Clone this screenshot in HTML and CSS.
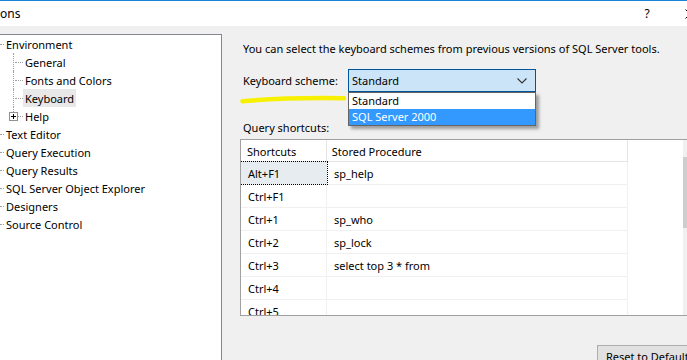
FILE: index.html
```html
<!DOCTYPE html>
<html>
<head>
<meta charset="utf-8">
<title>Options</title>
<link rel="stylesheet" href="styles.css">
</head>
<body>
<div class="window">
  <div class="titlebar">
    <span class="title">ons</span>
    <span class="help">?</span>
    <span class="close"><svg width="10" height="10" viewBox="0 0 10 10"><path d="M0.5 0.5L9.5 9.5M9.5 0.5L0.5 9.5" stroke="#000" stroke-width="1" fill="none"/></svg></span>
  </div>
  <div class="main">
    <div class="tree">
      <div class="node"><span class="conn-top"></span><span class="label">Environment</span></div>
      <div class="node"><span class="conn-child"></span><span class="label">General</span></div>
      <div class="node"><span class="conn-child"></span><span class="label">Fonts and Colors</span></div>
      <div class="node"><span class="conn-child"></span><span class="label selected">Keyboard</span></div>
      <div class="node"><span class="conn-child last"><span class="expander"></span></span><span class="label">Help</span></div>
      <div class="node"><span class="conn-top"></span><span class="label">Text Editor</span></div>
      <div class="node"><span class="conn-top"></span><span class="label">Query Execution</span></div>
      <div class="node"><span class="conn-top"></span><span class="label">Query Results</span></div>
      <div class="node"><span class="conn-top"></span><span class="label">SQL Server Object Explorer</span></div>
      <div class="node"><span class="conn-top"></span><span class="label">Designers</span></div>
      <div class="node"><span class="conn-top"></span><span class="label">Source Control</span></div>
    </div>
    <div class="pane">
      <p class="desc">You can select the keyboard schemes from previous versions of SQL Server tools.</p>
      <div class="scheme-row">
        <span class="scheme-label">Keyboard scheme:</span>
        <div class="combo-wrap">
          <div class="combo">
            <span class="combo-text">Standard</span>
            <svg class="chev" width="10" height="6" viewBox="0 0 10 6"><path d="M0.5 0.5L5 5L9.5 0.5" stroke="#333" stroke-width="1.1" fill="none"/></svg>
          </div>
          <div class="dropdown">
            <div class="opt">Standard</div>
            <div class="opt active">SQL Server 2000</div>
          </div>
        </div>
        <svg class="marker" width="110" height="10" viewBox="0 0 110 10"><path d="M2.5 7.2 C30 4.8, 70 3.6, 104 4.2" stroke="#f7f000" stroke-width="4.5" stroke-linecap="round" fill="none"/></svg>
      </div>
      <p class="qs-label">Query shortcuts:</p>
      <div class="grid">
        <div class="grid-body">
          <div class="row head">
            <div class="c1">Shortcuts</div>
            <div class="c2">Stored Procedure</div>
          </div>
          <div class="row">
            <div class="c1 focus">Alt+F1</div>
            <div class="c2">sp_help</div>
          </div>
          <div class="row">
            <div class="c1">Ctrl+F1</div>
            <div class="c2"></div>
          </div>
          <div class="row">
            <div class="c1">Ctrl+1</div>
            <div class="c2">sp_who</div>
          </div>
          <div class="row">
            <div class="c1">Ctrl+2</div>
            <div class="c2">sp_lock</div>
          </div>
          <div class="row">
            <div class="c1">Ctrl+3</div>
            <div class="c2">select top 3 * from</div>
          </div>
          <div class="row">
            <div class="c1">Ctrl+4</div>
            <div class="c2"></div>
          </div>
          <div class="row">
            <div class="c1">Ctrl+5</div>
            <div class="c2"></div>
          </div>
        </div>
        <div class="scrollbar"><div class="thumb"></div></div>
      </div>
      <div class="footer">
        <button class="btn">Reset to Default</button>
      </div>
    </div>
  </div>
</div>
</body>
</html>
```
FILE: styles.css
```css
* { box-sizing: border-box; }
html, body {
  margin: 0;
  padding: 0;
  width: 687px;
  height: 360px;
  overflow: hidden;
  background: #f0f0f0;
}
body {
  font-family: "Noto Sans", "Open Sans", sans-serif;
  font-size: 11px;
  color: #000;
}
.window {
  width: 687px;
  height: 360px;
  overflow: hidden;
}
.titlebar {
  height: 26px;
  border-top: 1px solid #1883d7;
  background: #fff;
  display: flex;
  align-items: center;
}
.title { line-height: 16px; font-size: 12px; }
.help {
  margin-left: auto;
  width: 40px;
  text-align: center;
  line-height: 16px;
  font-size: 12px;
}
.close {
  width: 46px;
  flex-shrink: 0;
  margin-right: -26px;
  display: flex;
  justify-content: center;
  align-items: center;
}
.close svg { display: block; }

.main {
  display: flex;
  padding-top: 8px;
  height: 334px;
}
.tree {
  width: 222px;
  flex-shrink: 0;
  background: #fff;
  border-top: 1px solid #828790;
  border-right: 1px solid #828790;
  height: 400px;
  display: flex;
  flex-direction: column;
}
.node {
  height: 18px;
  display: flex;
  align-items: center;
}
.label {
  padding: 1px 2px 0;
  height: 18px;
  line-height: 17px;
  white-space: nowrap;
}
.label.selected { background: #e8e8e8; }
.conn-top {
  width: 4px;
  height: 18px;
  position: relative;
}
.conn-top::after {
  content: "";
  position: absolute;
  left: 0;
  top: 9px;
  width: 4px;
  border-top: 1px dotted #a0a0a0;
}
.conn-child {
  margin-left: 13px;
  width: 10px;
  height: 18px;
  position: relative;
}
.conn-child::before {
  content: "";
  position: absolute;
  left: 0;
  top: 0;
  height: 18px;
  border-left: 1px dotted #a0a0a0;
}
.conn-child::after {
  content: "";
  position: absolute;
  left: 2px;
  top: 9px;
  width: 8px;
  border-top: 1px dotted #a0a0a0;
}
.conn-child.last::before { height: 5px; }
.conn-child.last::after { left: 5px; width: 5px; }
.expander {
  position: absolute;
  left: -4px;
  top: 5px;
  width: 9px;
  height: 9px;
  border: 1px solid #919191;
  background: #fff;
}
.expander::before {
  content: "";
  position: absolute;
  left: 1px;
  top: 3px;
  width: 5px;
  height: 1px;
  background: #000;
}
.expander::after {
  content: "";
  position: absolute;
  left: 3px;
  top: 1px;
  width: 1px;
  height: 5px;
  background: #000;
}

.pane {
  margin-left: 18px;
  display: flex;
  flex-direction: column;
  flex: 1;
  min-width: 0;
}
.desc {
  margin: 7px 0 0 3px;
  line-height: 16px;
  white-space: nowrap;
}
.scheme-row {
  margin-top: 12px;
  display: flex;
  align-items: center;
  position: relative;
  height: 23px;
}
.scheme-label {
  margin-left: 3px;
  width: 105px;
  line-height: 16px;
  white-space: nowrap;
}
.combo-wrap {
  position: relative;
  width: 188px;
  height: 23px;
}
.combo {
  height: 23px;
  border: 1px solid #005499;
  background: #cce4f7;
  display: flex;
  align-items: center;
  padding-left: 3px;
  padding-right: 5px;
}
.combo-text { flex: 1; line-height: 16px; }
.chev { display: block; margin-right: 3px; }
.dropdown {
  position: absolute;
  left: 0;
  top: 23px;
  width: 188px;
  border: 1px solid #646464;
  background: #fff;
  box-shadow: 3px 3px 3px rgba(0, 0, 0, 0.35);
  z-index: 2;
}
.opt {
  height: 16px;
  line-height: 16px;
  padding-left: 3px;
}
.opt.active {
  background: #3399ff;
  color: #fff;
}
.marker {
  position: absolute;
  left: 0;
  top: 25px;
  z-index: 1;
}
.qs-label {
  margin: 28px 0 0 3px;
  line-height: 16px;
}
.grid {
  margin-top: 3px;
  width: 461px;
  height: 177px;
  flex-shrink: 0;
  border: 1px solid #a0a0a0;
  background: #fff;
  display: flex;
  overflow: hidden;
}
.grid-body {
  flex: 1;
  overflow: hidden;
}
.row {
  display: flex;
  width: 387px;
  height: 23px;
  border-bottom: 1px solid #f0f0f0;
}
.row.head {
  height: 22px;
  border-bottom: 1px solid #e5e5e5;
}
.c1, .c2 {
  display: flex;
  align-items: center;
  white-space: nowrap;
  border-right: 1px solid #f0f0f0;
  padding-top: 1px;
}
.c1 { width: 86px; padding-left: 7px; }
.c2 { width: 301px; padding-left: 7px; }
.head .c1 { padding-left: 6px; border-right-color: #e5e5e5; }
.head .c2 { padding-left: 5px; width: 302px; border-right-color: #e5e5e5; }
.c1.focus {
  background: #e6ecf0;
  outline: 1px dotted #000;
  outline-offset: 0;
  border-right-color: transparent;
}
.scrollbar {
  width: 17px;
  flex-shrink: 0;
  background: #f0f0f0;
  padding-top: 17px;
}
.thumb {
  width: 17px;
  height: 71px;
  background: #cdcdcd;
}
.footer {
  margin-top: 29px;
  padding-left: 357px;
  display: flex;
}
.btn {
  flex-shrink: 0;
  width: 110px;
  height: 23px;
  border: 1px solid #adadad;
  background: #e1e1e1;
  font-family: inherit;
  font-size: 11px;
  color: #000;
  padding: 0 0 0 8px;
  text-align: left;
  white-space: nowrap;
}
```
